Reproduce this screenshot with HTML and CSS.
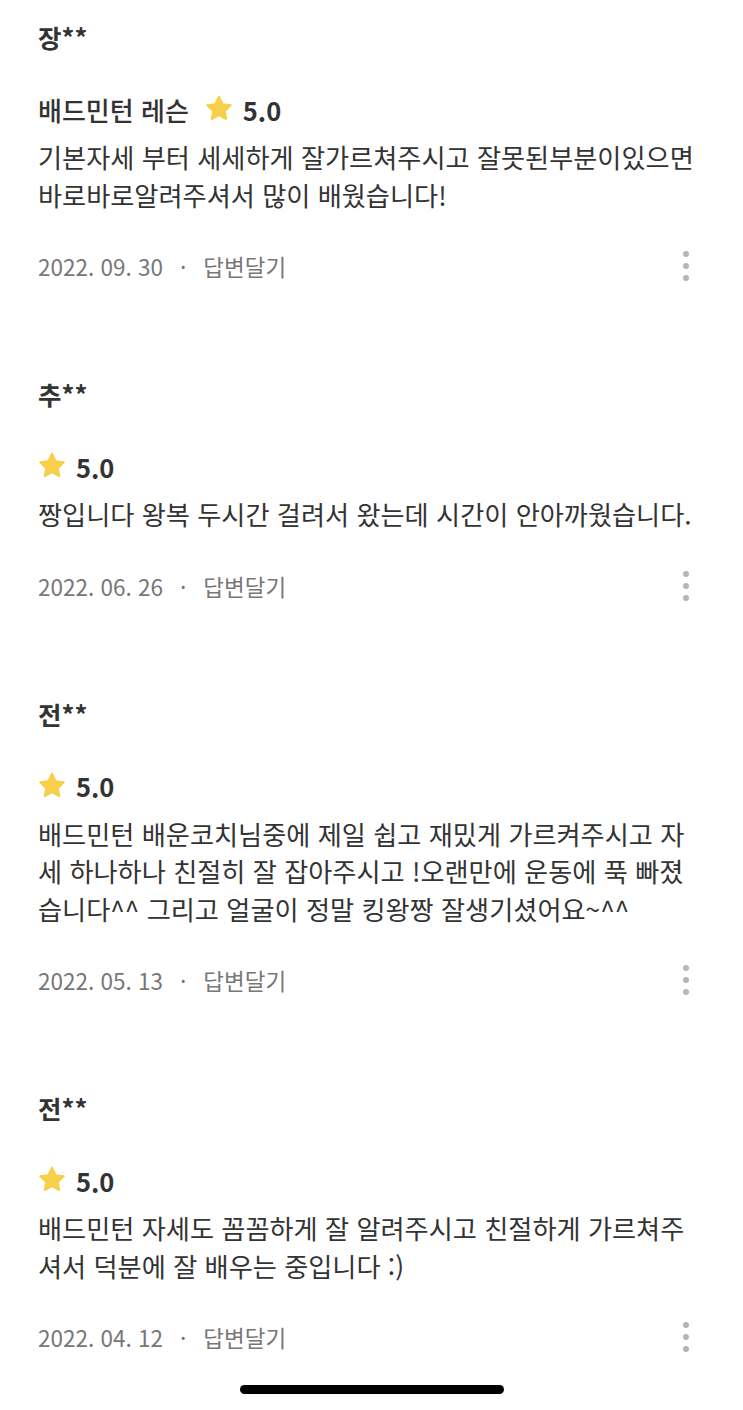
FILE: index.html
```html
<!DOCTYPE html>
<html lang="ko">
<head>
  <meta charset="UTF-8" />
  <meta name="viewport" content="width=device-width, initial-scale=1" />
  <title>리뷰</title>
  <link rel="stylesheet" href="styles.css">
</head>
<body>
  <ul class="review-list">
    <li class="review">
      <div class="review-name">장**</div>
      <div class="review-rating">
        <span class="review-product">배드민턴 레슨</span>
        <svg class="star" viewBox="0 0 24 24"><path d="M12 2.8l2.7 5.6 6.1.8-4.5 4.2 1.1 6.1L12 16.6l-5.4 2.9 1.1-6.1-4.5-4.2 6.1-.8z"/></svg>
        <span class="score">5.0</span>
      </div>
      <p class="review-text">기본자세 부터 세세하게 잘가르쳐주시고 잘못된부분이있으면 바로바로알려주셔서 많이 배웠습니다!</p>
      <div class="review-meta">
        <span>2022. 09. 30</span>
        <span class="dot">·</span>
        <a class="reply">답변달기</a>
        <button class="more" aria-label="더보기"><svg viewBox="0 0 24 36"><circle cx="12" cy="6" r="3"/><circle cx="12" cy="18" r="3"/><circle cx="12" cy="30" r="3"/></svg></button>
      </div>
    </li>
    <li class="review">
      <div class="review-name">추**</div>
      <div class="review-rating">
        <svg class="star" viewBox="0 0 24 24"><path d="M12 2.8l2.7 5.6 6.1.8-4.5 4.2 1.1 6.1L12 16.6l-5.4 2.9 1.1-6.1-4.5-4.2 6.1-.8z"/></svg>
        <span class="score">5.0</span>
      </div>
      <p class="review-text">짱입니다 왕복 두시간 걸려서 왔는데 시간이 안아까웠습니다.</p>
      <div class="review-meta">
        <span>2022. 06. 26</span>
        <span class="dot">·</span>
        <a class="reply">답변달기</a>
        <button class="more" aria-label="더보기"><svg viewBox="0 0 24 36"><circle cx="12" cy="6" r="3"/><circle cx="12" cy="18" r="3"/><circle cx="12" cy="30" r="3"/></svg></button>
      </div>
    </li>
    <li class="review">
      <div class="review-name">전**</div>
      <div class="review-rating">
        <svg class="star" viewBox="0 0 24 24"><path d="M12 2.8l2.7 5.6 6.1.8-4.5 4.2 1.1 6.1L12 16.6l-5.4 2.9 1.1-6.1-4.5-4.2 6.1-.8z"/></svg>
        <span class="score">5.0</span>
      </div>
      <p class="review-text">배드민턴 배운코치님중에 제일 쉽고 재밌게 가르켜주시고 자세 하나하나 친절히 잘 잡아주시고 !오랜만에 운동에 푹 빠졌습니다^^ 그리고 얼굴이 정말 킹왕짱 잘생기셨어요~^^</p>
      <div class="review-meta">
        <span>2022. 05. 13</span>
        <span class="dot">·</span>
        <a class="reply">답변달기</a>
        <button class="more" aria-label="더보기"><svg viewBox="0 0 24 36"><circle cx="12" cy="6" r="3"/><circle cx="12" cy="18" r="3"/><circle cx="12" cy="30" r="3"/></svg></button>
      </div>
    </li>
    <li class="review">
      <div class="review-name">전**</div>
      <div class="review-rating">
        <svg class="star" viewBox="0 0 24 24"><path d="M12 2.8l2.7 5.6 6.1.8-4.5 4.2 1.1 6.1L12 16.6l-5.4 2.9 1.1-6.1-4.5-4.2 6.1-.8z"/></svg>
        <span class="score">5.0</span>
      </div>
      <p class="review-text">배드민턴 자세도 꼼꼼하게 잘 알려주시고 친절하게 가르쳐주셔서 덕분에 잘 배우는 중입니다 :)</p>
      <div class="review-meta">
        <span>2022. 04. 12</span>
        <span class="dot">·</span>
        <a class="reply">답변달기</a>
        <button class="more" aria-label="더보기"><svg viewBox="0 0 24 36"><circle cx="12" cy="6" r="3"/><circle cx="12" cy="18" r="3"/><circle cx="12" cy="30" r="3"/></svg></button>
      </div>
    </li>
  </ul>

  <div class="home-bar"></div>
</body>
</html>
```

FILE: styles.css
```css
body {
  margin: 0;
  background: #fff;
  color: #333;
  font-family: "Noto Sans CJK KR", "Noto Sans", sans-serif;
}
.review-list {
  list-style: none;
  margin: 0;
  padding: 22px 38px 0 38px;
}
.review {
  margin-bottom: 98px;
}
.review-name {
  font-size: 25.5px;
  font-weight: 700;
  line-height: 30px;
  margin-bottom: 42px;
}
.review-rating {
  display: flex;
  align-items: center;
  height: 30px;
  margin-bottom: 15px;
}
.review-product {
  font-size: 26px;
  font-weight: 500;
  margin-right: 16px;
}
.star {
  width: 32px;
  height: 32px;
  margin-left: -2px;
  fill: #f7d04b;
  stroke: #f7d04b;
  stroke-width: 1.6;
  stroke-linejoin: round;
  margin-right: 8px;
}
.score {
  font-size: 25.5px;
  font-weight: 700;
}
.review-text {
  margin: 0;
  font-size: 26.2px;
  line-height: 37.5px;
}
.review-meta {
  display: flex;
  align-items: center;
  height: 30px;
  margin-top: 37px;
  font-size: 22.5px;
  color: #777;
}
.dot {
  margin: 0 17px;
}
.reply {
  color: #777;
}
.more {
  margin-left: auto;
  margin-right: 7px;
  width: 24px;
  height: 36px;
  padding: 0;
  border: none;
  background: none;
}
.more svg {
  display: block;
  width: 24px;
  height: 36px;
  fill: #b4b4b4;
}
.home-bar {
  position: fixed;
  left: 240px;
  bottom: 16px;
  width: 264px;
  height: 9px;
  border-radius: 5px;
  background: #000;
}
```
